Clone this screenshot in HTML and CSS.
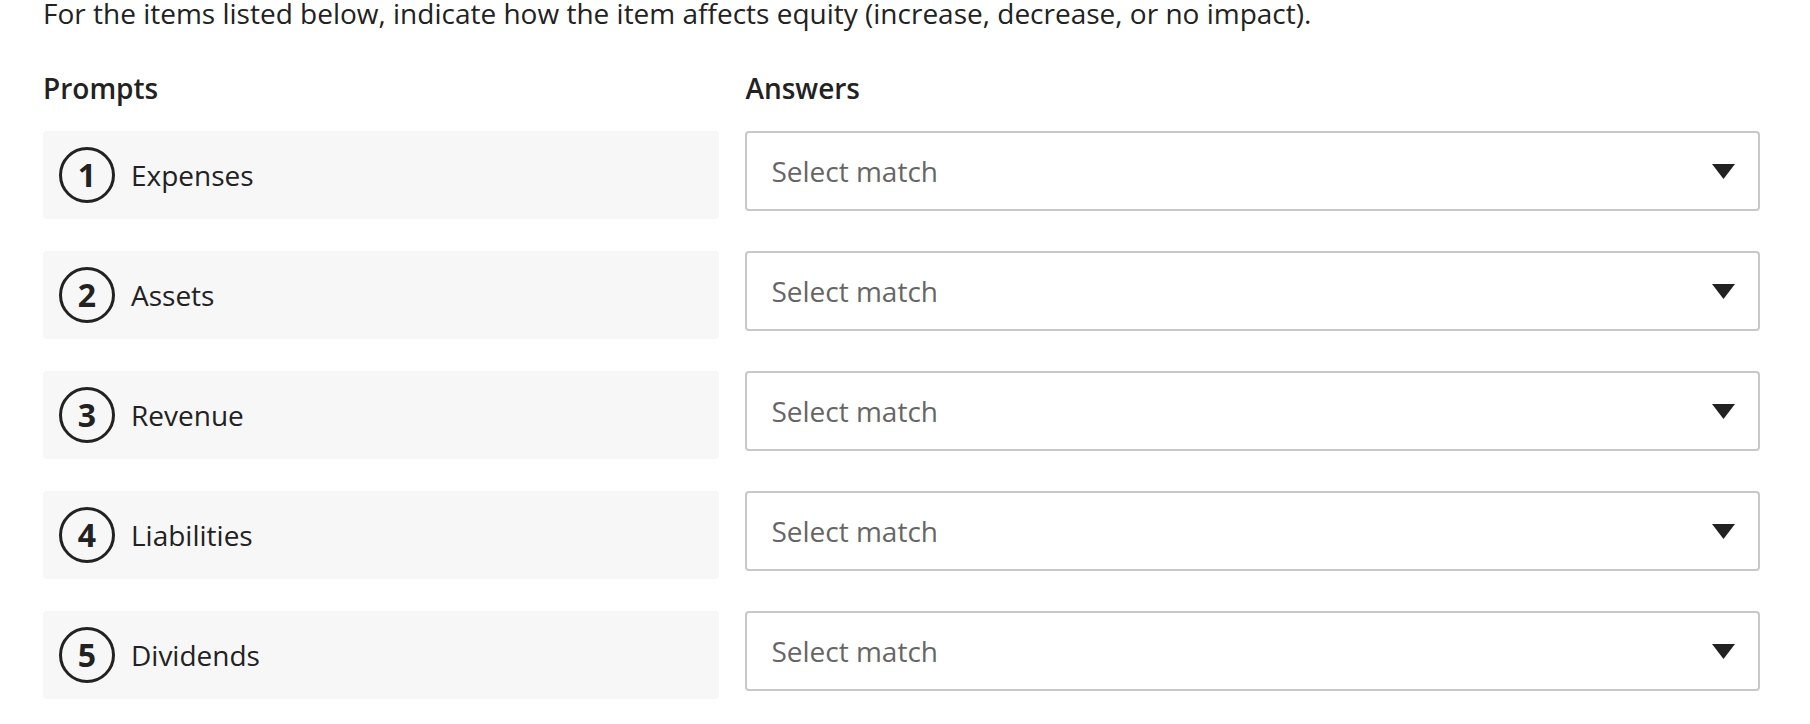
FILE: index.html
```
<!DOCTYPE html>
<html lang="en">
<head>
  <meta charset="UTF-8" />
  <title>Matching</title>
  <link rel="stylesheet" href="styles.css">
</head>
<body>
  <div class="question">
    <p class="instructions">For the items listed below, indicate how the item affects equity (increase, decrease, or no impact).</p>

    <div class="col-heads">
      <h2>Prompts</h2>
      <h2>Answers</h2>
    </div>

    <div class="rows" id="rows">
      <div class="prompt"><span class="num">1</span><span class="label">Expenses</span></div>
      <div class="answer">
        <select><option>Select match</option><option>Increase</option><option>Decrease</option><option>No impact</option></select>
        <svg class="caret" width="23" height="15" viewBox="0 0 23 15"><path d="M0 0h23L11.5 15z" fill="#222"/></svg>
      </div>

      <div class="prompt"><span class="num">2</span><span class="label">Assets</span></div>
      <div class="answer">
        <select><option>Select match</option><option>Increase</option><option>Decrease</option><option>No impact</option></select>
        <svg class="caret" width="23" height="15" viewBox="0 0 23 15"><path d="M0 0h23L11.5 15z" fill="#222"/></svg>
      </div>

      <div class="prompt"><span class="num">3</span><span class="label">Revenue</span></div>
      <div class="answer">
        <select><option>Select match</option><option>Increase</option><option>Decrease</option><option>No impact</option></select>
        <svg class="caret" width="23" height="15" viewBox="0 0 23 15"><path d="M0 0h23L11.5 15z" fill="#222"/></svg>
      </div>

      <div class="prompt"><span class="num">4</span><span class="label">Liabilities</span></div>
      <div class="answer">
        <select><option>Select match</option><option>Increase</option><option>Decrease</option><option>No impact</option></select>
        <svg class="caret" width="23" height="15" viewBox="0 0 23 15"><path d="M0 0h23L11.5 15z" fill="#222"/></svg>
      </div>

      <div class="prompt"><span class="num">5</span><span class="label">Dividends</span></div>
      <div class="answer">
        <select><option>Select match</option><option>Increase</option><option>Decrease</option><option>No impact</option></select>
        <svg class="caret" width="23" height="15" viewBox="0 0 23 15"><path d="M0 0h23L11.5 15z" fill="#222"/></svg>
      </div>
    </div>
  </div>
</body>
</html>
```

FILE: styles.css
```
body {
  margin: 0;
  background: #fff;
  color: #222;
  font-family: "Open Sans", Arial, sans-serif;
}

.question {
  padding: 0 50px 0 43px;
}

.instructions {
  margin: 0;
  font-size: 28px;
  line-height: 26px;
}

.col-heads,
.rows {
  display: grid;
  grid-template-columns: 2fr 3fr;
  column-gap: 26px;
}

.col-heads {
  margin-top: 44px;
  margin-bottom: 25px;
}

.col-heads h2 {
  margin: 0;
  font-size: 28px;
  font-weight: 600;
  line-height: 36px;
}

.rows {
  row-gap: 32px;
  align-items: start;
}

.prompt {
  display: flex;
  align-items: center;
  gap: 16px;
  height: 88px;
  padding-left: 16px;
  background: #f7f7f7;
  border-radius: 4px;
}

.num {
  display: flex;
  align-items: center;
  justify-content: center;
  box-sizing: border-box;
  width: 56px;
  height: 56px;
  border: 3.5px solid #222;
  border-radius: 50%;
  font-size: 32px;
  font-weight: 700;
  line-height: 1;
}

.label {
  font-size: 28px;
}

.answer {
  position: relative;
}

.answer select {
  appearance: none;
  -webkit-appearance: none;
  display: block;
  width: 100%;
  height: 80px;
  padding: 0 60px 0 24px;
  border: 2px solid #c8c8c8;
  border-radius: 4px;
  background: #fff;
  color: #666;
  font-family: inherit;
  font-size: 28px;
}

.caret {
  position: absolute;
  right: 25px;
  top: 33px;
  pointer-events: none;
}
```
